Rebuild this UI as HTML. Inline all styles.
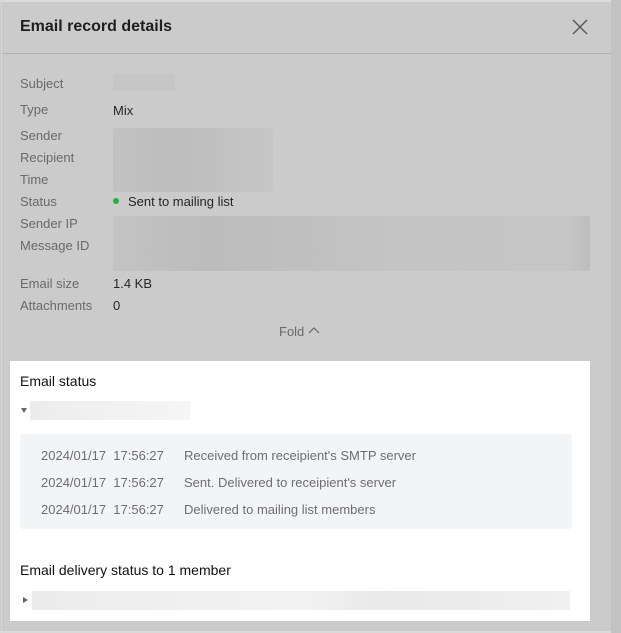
<!DOCTYPE html>
<html><head><style>
*{margin:0;padding:0;box-sizing:border-box}
body{width:621px;height:633px;background:#cbcbcb;font-family:"Liberation Sans",sans-serif;position:relative;overflow:hidden}
.rs{position:absolute;left:611px;top:0;width:10px;height:633px;background:#c2c2c2}
.tb{position:absolute;left:0;top:0;width:611px;height:2px;background:#dcdcdc}
.l{position:absolute;left:1px;top:0;width:1px;height:633px;background:#d6d6d6}
.t{position:absolute;font-size:13px;color:#6a6a6a}
.v{position:absolute;font-size:13px;color:#262626;left:113px}
.blur{position:absolute;background:#c3c3c3;border-radius:2px}
h1{position:absolute;left:20px;top:18px;font-size:16px;font-weight:bold;color:#1f1f1f}
.hr{position:absolute;left:2px;top:53px;width:609px;height:1px;background:#b4b4b4}
.panel{position:absolute;left:10px;top:361px;width:580px;height:260px;background:#fff}
.p{position:absolute;font-size:13px;color:#6e6e6e}
</style></head><body>
<div class="tb"></div><div class="l"></div><div class="rs"></div>
<h1>Email record details</h1>
<svg style="position:absolute;left:572px;top:19px" width="16" height="16" viewBox="0 0 16 16"><path d="M1 1L15 15M15 1L1 15" stroke="#555" stroke-width="1.4"/></svg>
<div class="hr"></div>
<div class="t" style="left:20px;top:76px">Subject</div>
<div class="blur" style="left:113px;top:74px;width:62px;height:17px;background:#c6c6c6"></div>
<div class="t" style="left:20px;top:102px">Type</div>
<div class="v" style="top:103px">Mix</div>
<div class="t" style="left:20px;top:128px">Sender</div>
<div class="t" style="left:20px;top:150px">Recipient</div>
<div class="t" style="left:20px;top:172px">Time</div>
<div class="blur" style="left:113px;top:128px;width:160px;height:64px;background:linear-gradient(90deg,#c2c2c2,#bdbdbd 40%,#c6c6c6)"></div>
<div class="t" style="left:20px;top:194px">Status</div>
<div style="position:absolute;left:113px;top:198px;width:6px;height:6px;border-radius:50%;background:#23b33a"></div>
<div class="v" style="left:128px;top:194px">Sent to mailing list</div>
<div class="t" style="left:20px;top:216px">Sender IP</div>
<div class="t" style="left:20px;top:238px">Message ID</div>
<div class="blur" style="left:113px;top:216px;width:477px;height:55px;background:linear-gradient(90deg,#c3c3c3,#bcbcbc 20%,#c4c4c4 60%,#c6c6c6 95%,#bdbdbd)"></div>
<div class="t" style="left:20px;top:276px">Email size</div>
<div class="v" style="top:276px">1.4 KB</div>
<div class="t" style="left:20px;top:298px">Attachments</div>
<div class="v" style="top:298px">0</div>
<div class="t" style="left:279px;top:324px">Fold</div>
<svg style="position:absolute;left:308px;top:326px" width="12" height="8" viewBox="0 0 12 8"><path d="M1 7L6 2L11 7" stroke="#666" stroke-width="1.2" fill="none"/></svg>
<div class="panel">
<div style="position:absolute;left:10px;top:12px;font-size:14px;color:#111">Email status</div>
<div style="position:absolute;left:11px;top:47px;width:0;height:0;border-left:3px solid transparent;border-right:3px solid transparent;border-top:5px solid #666"></div>
<div style="position:absolute;left:20px;top:40px;width:160px;height:19px;background:linear-gradient(90deg,#ececec,#f6f6f6)"></div>
<div style="position:absolute;left:10px;top:73px;width:552px;height:95px;background:#f3f4f6;border-radius:3px"></div>
<div class="p" style="left:31px;top:87px">2024/01/17&nbsp;&nbsp;17:56:27</div><div class="p" style="left:174px;top:87px">Received from receipient's SMTP server</div>
<div class="p" style="left:31px;top:114px">2024/01/17&nbsp;&nbsp;17:56:27</div><div class="p" style="left:174px;top:114px">Sent. Delivered to receipient's server</div>
<div class="p" style="left:31px;top:141px">2024/01/17&nbsp;&nbsp;17:56:27</div><div class="p" style="left:174px;top:141px">Delivered to mailing list members</div>
<div style="position:absolute;left:10px;top:201px;font-size:14px;color:#111">Email delivery status to 1 member</div>
<div style="position:absolute;left:13px;top:236px;width:0;height:0;border-top:3px solid transparent;border-bottom:3px solid transparent;border-left:5px solid #666"></div>
<div style="position:absolute;left:22px;top:230px;width:538px;height:19px;background:linear-gradient(90deg,#ececec,#f2f2f2 50%,#e9e9e9 65%,#f0f0f0)"></div>
</div>
<div style="position:absolute;left:0;top:631px;width:611px;height:2px;background:#dadada"></div>
</body></html>
